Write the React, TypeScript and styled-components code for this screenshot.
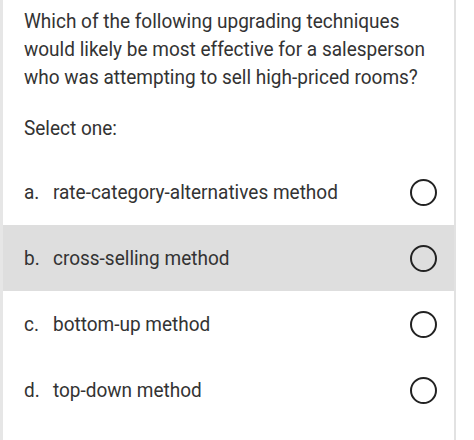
import React from "react";
import styled, { createGlobalStyle } from "styled-components";

const GlobalStyle = createGlobalStyle`
  body {
    margin: 0;
    background: #ffffff;
    font-family: Roboto, "Liberation Sans", sans-serif;
  }
`;

const options = [
  { letter: "a.", label: "rate-category-alternatives method" },
  { letter: "b.", label: "cross-selling method", active: true },
  { letter: "c.", label: "bottom-up method" },
  { letter: "d.", label: "top-down method" },
];

const App = () => {
  return (
    <>
      <GlobalStyle />
      <Page>
        <Card>
          <Question>
            Which of the following upgrading techniques
            <br />
            would likely be most effective for a salesperson
            <br />
            who was attempting to sell high-priced rooms?
          </Question>
          <Prompt>Select one:</Prompt>
          <OptionList>
            {options.map((o) => (
              <Option key={o.letter} $active={!!o.active}>
                <OptionText>
                  <Letter>{o.letter}</Letter>
                  {o.label}
                </OptionText>
                <Radio />
              </Option>
            ))}
          </OptionList>
        </Card>
      </Page>
    </>
  );
};

export default App;

const Page = styled.div`
  width: 474px;
  height: 440px;
  display: flex;
  overflow: hidden;
`;

const Card = styled.div`
  width: 456px;
  height: 440px;
  box-sizing: border-box;
  border-left: 3px solid #e6e6e6;
  border-right: 2px solid #e2e2e2;
  background: #ffffff;
  padding-top: 7px;
  display: flex;
  flex-direction: column;
`;

// the screenshot is squeezed sideways, so the text is narrowed to match
const Question = styled.div`
  margin-left: 21px;
  font-size: 21px;
  line-height: 28px;
  color: #333333;
  white-space: nowrap;
  transform: scaleX(0.905);
  transform-origin: left center;
`;

const Prompt = styled.div`
  margin: 23px 0 0 21px;
  font-size: 21px;
  line-height: 28px;
  color: #333333;
  transform: scaleX(0.905);
  transform-origin: left center;
`;

const OptionList = styled.div`
  margin-top: 17px;
  display: flex;
  flex-direction: column;
`;

const Option = styled.div<{ $active: boolean }>`
  height: 66px;
  display: flex;
  align-items: center;
  justify-content: space-between;
  padding: 0 17px 0 21px;
  background: ${(p) => (p.$active ? "#dedede" : "transparent")};
`;

const OptionText = styled.div`
  display: flex;
  font-size: 21px;
  color: #333333;
  white-space: nowrap;
  transform: scaleX(0.905);
  transform-origin: left center;
`;

const Letter = styled.span`
  width: 32px;
  flex-shrink: 0;
`;

const Radio = styled.span`
  width: 27px;
  height: 27px;
  box-sizing: border-box;
  border: 2.5px solid #222222;
  border-radius: 50%;
  flex-shrink: 0;
`;
